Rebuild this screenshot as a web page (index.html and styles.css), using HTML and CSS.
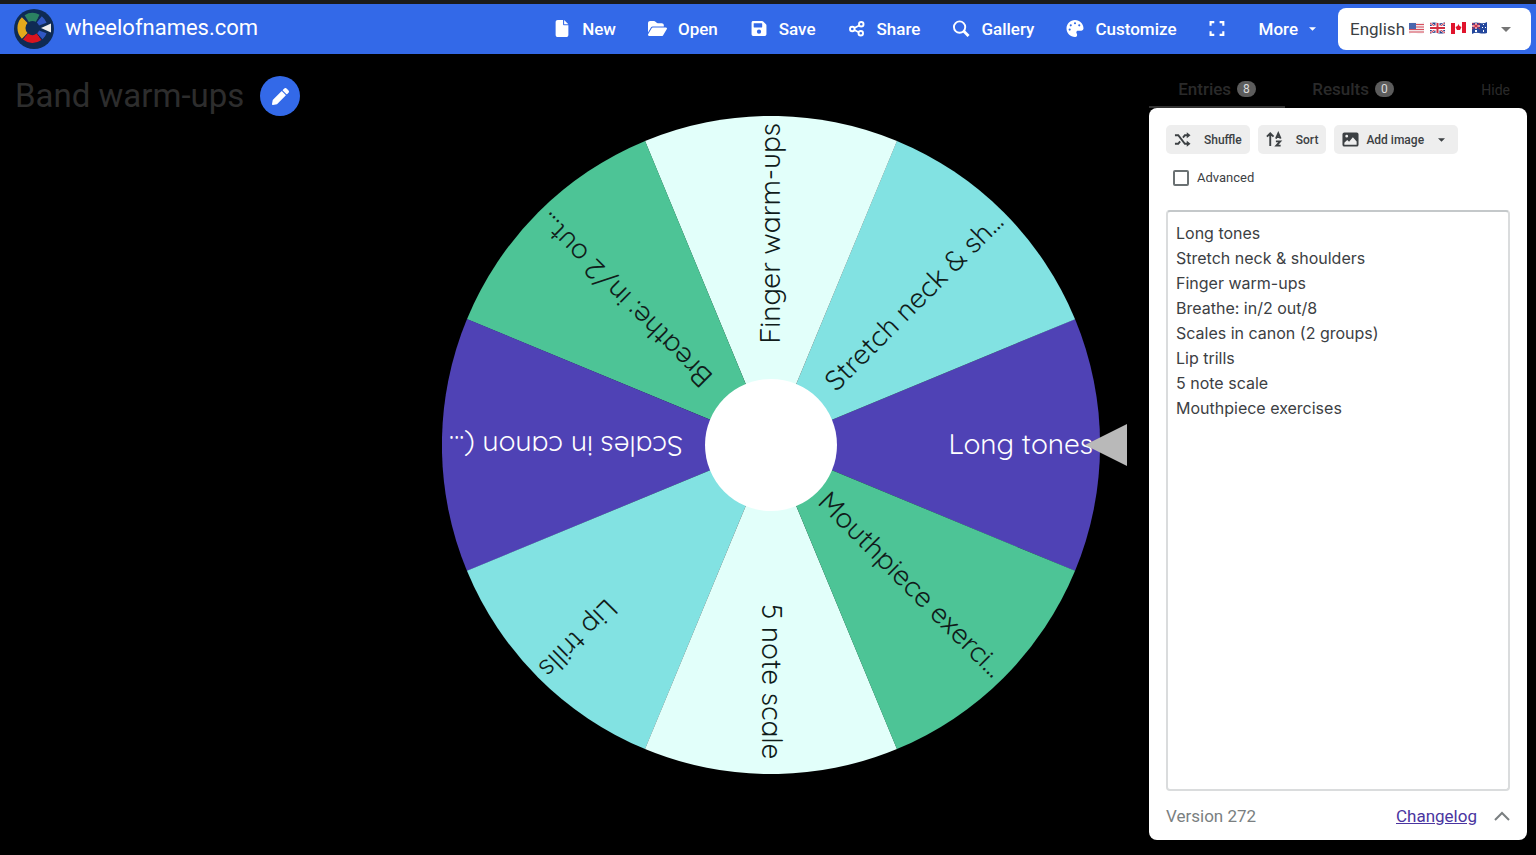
FILE: index.html
```html
<!DOCTYPE html>
<html lang="en">
<head>
    <meta charset="UTF-8">
    <title>Band warm-ups | wheelofnames.com</title>
    <link rel="stylesheet" href="styles.css">
</head>
<body>
    <header class="toolbar">
        <a class="brand" href="#">
            <svg class="logo" viewBox="0 0 40 40" fill="none" stroke-width="8">
                <circle cx="20" cy="20" r="20" fill="#0f2b54"/>
                <path d="M10.7 26.8A11 11 0 0 1 10.7 11.2" stroke="#e3a91c"/>
                <path d="M12.7 9.7A11 11 0 0 1 23.7 9.3" stroke="#2b8262"/>
                <path d="M25.3 10.3A11 11 0 0 1 28.8 15.2M28.8 22.8A11 11 0 0 1 25.9 27.2" stroke="#3057c4"/>
                <path d="M25 27.8A11 11 0 0 1 11.5 27.500" stroke="#d8141f"/>
                <path d="M27 19L37 14.500V23.500Z" fill="#eee"/>
            </svg>
            <span>wheelofnames.com</span>
        </a>
        <nav class="menu">
            <button type="button">
                <svg viewBox="-64 0 512 512"><path d="M0 64C0 28.700 28.700 0 64 0H224V128c0 17.700 14.300 32 32 32H384V448c0 35.300-28.700 64-64 64H64c-35.300 0-64-28.700-64-64V64zM384 128H256V0z"/></svg>
                New
            </button>
            <button type="button">
                <svg class="wide" viewBox="0 0 576 512"><path d="M88.700 223.800L0 375.800V96C0 60.700 28.700 32 64 32H181.500c17 0 33.300 6.700 45.300 18.700l26.500 26.500c12 12 28.300 18.700 45.300 18.700H416c35.300 0 64 28.700 64 64v32H144c-22.800 0-43.800 12.100-55.300 31.800zm27.600 16.100C122.100 230 132.600 224 144 224H544c11.500 0 22 6.100 27.700 16.100s5.700 22.200-.1 32.100l-112 192C453.900 474 443.400 480 432 480H32c-11.500 0-22-6.100-27.700-16.100s-5.700-22.200 .1-32.100z"/></svg>
                Open
            </button>
            <button type="button">
                <svg viewBox="-32 0 512 512"><path d="M434 130l-84-84A48 48 0 0 0 316 32H48C21.500 32 0 53.500 0 80v352c0 26.500 21.500 48 48 48h352c26.500 0 48-21.500 48-48V164a48 48 0 0 0-14-34zM224 416a64 64 0 1 1 0-128 64 64 0 0 1 0 128zM320 111V212c0 6.600-5.400 12-12 12H76c-6.600 0-12-5.400-12-12V108c0-6.600 5.400-12 12-12h228c10 0 16 6 16 15z"/></svg>
                Save
            </button>
            <button type="button">
                <svg class="line" viewBox="0 0 18 18"><circle cx="4" cy="9.500" r="2.400"/><circle cx="13.500" cy="4.500" r="2.400"/><circle cx="13" cy="14" r="2.400"/><path d="M6.200 8.500L11.300 5.800M6.200 10.600L10.800 13"/></svg>
                Share
            </button>
            <button type="button">
                <svg class="line" viewBox="0 0 18 18"><circle cx="7.500" cy="7.500" r="6"/><path d="M11.500 11.500L17 17" stroke-width="3"/></svg>
                Gallery
            </button>
            <button type="button">
                <svg viewBox="0 0 512 512"><path d="M512 256c0 .9 0 1.800 0 2.700c-.4 36.500-33.600 61.300-70.100 61.300H344c-26.500 0-48 21.500-48 48c0 3.400 .4 6.700 1 9.900c2.100 10.200 6.500 20 10.800 29.900c6.100 13.800 12.100 27.500 12.100 42c0 31.800-21.600 60.700-53.400 62c-3.500 .1-7 .2-10.600 .2C114.600 512 0 397.400 0 256S114.600 0 256 0S512 114.600 512 256zM128 288a32 32 0 1 0 -64 0 32 32 0 1 0 64 0zm0-96a32 32 0 1 0 0-64 32 32 0 1 0 0 64zM288 96a32 32 0 1 0 -64 0 32 32 0 1 0 64 0zm96 96a32 32 0 1 0 0-64 32 32 0 1 0 0 64z"/></svg>
                Customize
            </button>
            <button type="button" aria-label="Fullscreen">
                <svg class="line" viewBox="2 1 16 16"><path d="M3 6.500V3H6.500M11.500 3H15V6.500M15 11.500V15H11.500M6.500 15H3V11.500"/></svg>
            </button>
            <button type="button" class="more">
                More
                <svg class="caret" viewBox="0 0 8 4"><path d="M0 0H8L4 4Z"/></svg>
            </button>
            <div class="language">
                <select aria-label="Language">
                    <option>English</option>
                </select>
                <span class="flags">
                    <svg viewBox="0 0 15 12"><path fill="#f2e6e8" d="M0 1Q4 0 8 1T15 0V11Q11 12 7 11T0 12Z"/><path stroke="#d8505e" d="M0 2.500H15M0 5H15M0 7.500H15M0 10H15"/><path fill="#4a66ad" d="M0 1H7V7H0Z"/></svg>
                    <svg viewBox="0 0 15 12"><path fill="#28408c" d="M0 1Q4 0 8 1T15 0V11Q11 12 7 11T0 12Z"/><path stroke="#fff" stroke-width="2" d="M0 1L15 11M15 1L0 11"/><path stroke="#d22f43" d="M0 1L15 11M15 1L0 11"/><path stroke="#fff" stroke-width="4" d="M7.500 1V11M0 6H15"/><path stroke="#d22f43" stroke-width="2" d="M7.500 1V11M0 6H15"/></svg>
                    <svg viewBox="0 0 15 12"><path fill="#fff" d="M0 1Q4 0 8 1T15 0V11Q11 12 7 11T0 12Z"/><path fill="#e0142c" d="M0 1H4V12H0ZM11 0H15V11H11ZM7.500 2L8.500 4 10.500 5 9 8H6L4.500 5 6.500 4Z"/></svg>
                    <svg viewBox="0 0 15 12"><path fill="#24479c" d="M0 1Q4 0 8 1T15 0V11Q11 12 7 11T0 12Z"/><path stroke="#fff" stroke-width="2" d="M0 4H8M4 1V7"/><path stroke="#d22f43" d="M0 4H8M4 1V7M0 1L8 7M8 1L0 7"/><path fill="#fff" d="M3 8H5V10H3ZM11 2H12V3H11ZM10 5H11V6H10ZM13 5H14V6H13ZM11 8H12V10H11Z"/></svg>
                </span>
                <svg class="arrow" viewBox="0 0 10 5"><path d="M0 0H10L5 5Z"/></svg>
            </div>
        </nav>
    </header>

    <main class="stage">
        <section class="title">
            <h1>Band warm-ups</h1>
            <button type="button" class="edit" aria-label="Edit title">
                <svg viewBox="0 0 512 512"><path d="M498 142l-46 46c-5 5-12 5-17 0l-111-111c-5-5-5-12 0-17l46-46c19-19 49-19 68 0l60 60c19 19 19 49 0 68zM284 100L22 362 0 484c-3 16 11 31 28 28l122-22 262-262c5-5 5-12 0-17l-111-111c-5-5-12-5-17 0z"/></svg>
            </button>
        </section>

        <svg class="wheel" viewBox="-329 -329 685 658">
            <defs>
                <path id="slice" d="M0 0L304 -126A329 329 0 0 1 304 126Z"/>
            </defs>
            <g class="purple">
                <use href="#slice"/>
                <text x="322" y="9">Long tones</text>
            </g>
            <g class="cyan" transform="rotate(-45)">
                <use href="#slice"/>
                <text x="322" y="9">Stretch neck &amp; sh...</text>
            </g>
            <g class="pale" transform="rotate(-90)">
                <use href="#slice"/>
                <text x="322" y="9">Finger warm-ups</text>
            </g>
            <g class="green" transform="rotate(-135)">
                <use href="#slice"/>
                <text x="322" y="9">Breathe: in/2 out...</text>
            </g>
            <g class="purple" transform="rotate(180)">
                <use href="#slice"/>
                <text x="322" y="9">Scales in canon (...</text>
            </g>
            <g class="cyan" transform="rotate(135)">
                <use href="#slice"/>
                <text x="322" y="9">Lip trills</text>
            </g>
            <g class="pale" transform="rotate(90)">
                <use href="#slice"/>
                <text x="322" y="9">5 note scale&nbsp;</text>
            </g>
            <g class="green" transform="rotate(45)">
                <use href="#slice"/>
                <text x="322" y="9">Mouthpiece exerci...</text>
            </g>
            <circle r="66" fill="#fff"/>
            <path class="pointer" d="M314 0L356 -21V21Z"/>
        </svg>

        <aside class="side">
            <div class="tabs">
                <button type="button" class="tab active">Entries <span class="count">8</span></button>
                <button type="button" class="tab">Results <span class="count">0</span></button>
                <button type="button" class="hide">Hide</button>
            </div>
            <div class="card">
                <div class="tools">
                    <button type="button">
                        <svg class="line" viewBox="0 0 18 18"><path d="M1 4.500H4.500L11.500 13.500H15M1 13.500H4.500L6.500 11M9.500 7L11.500 4.500H15"/><path class="solid" d="M13.500 1.200L17.500 4.500 13.500 7.800ZM13.500 10.200L17.500 13.500 13.500 16.800Z"/></svg>
                        <span>Shuffle</span>
                    </button>
                    <button type="button">
                        <svg class="line" viewBox="0 0 18 18"><path d="M4.500 16V3M1 6L4.500 2.500 8 6M10.500 8L13 2.500 15.500 8M11.300 6.500H14.700M10.500 11H15L11 15.500H15.500"/></svg>
                        <span>Sort</span>
                    </button>
                    <button type="button" class="add">
                        <svg viewBox="0 0 18 18"><path fill-rule="evenodd" d="M2.500 1.500H15.500Q17.500 1.500 17.500 3.500V14.500Q17.500 16.500 15.500 16.500H2.500Q.5 16.500 .5 14.500V3.500Q.5 1.500 2.500 1.500ZM2.500 14.500H15.500V11L11.500 6.500 7.500 11.500 5.500 9.500 2.500 12.500ZM5 4A1.500 1.500 0 1 0 5 7 1.500 1.500 0 1 0 5 4Z"/></svg>
                        <span>Add image</span>
                        <svg class="caret" viewBox="0 0 8 4"><path d="M0 0H8L4 4Z"/></svg>
                    </button>
                </div>
                <label class="advanced"><input type="checkbox"> Advanced</label>
                <textarea aria-label="Entries" spellcheck="false">Long tones
Stretch neck &amp; shoulders
Finger warm-ups
Breathe: in/2 out/8
Scales in canon (2 groups)
Lip trills
5 note scale
Mouthpiece exercises</textarea>
                <footer class="version">
                    <span>Version 272</span>
                    <a href="#">Changelog</a>
                    <button type="button" aria-label="Expand">
                        <svg class="line" viewBox="0 0 16 10"><path d="M1 9L8 2L15 9"/></svg>
                    </button>
                </footer>
            </div>
        </aside>
    </main>
</body>
</html>
```
FILE: styles.css
```css
* {
    box-sizing: border-box;
}
body {
    margin: 0;
    min-height: 100vh;
    display: flex;
    flex-direction: column;
    background: #000;
    font-family: Roboto, "Liberation Sans", sans-serif;
    color: #3c4043;
}
button {
    border: none;
    padding: 0;
    background: none;
    color: inherit;
    font: inherit;
    cursor: pointer;
}
svg {
    display: block;
    flex: none;
    fill: currentColor;
}
.line {
    fill: none;
    stroke: currentColor;
    stroke-width: 2;
}
.solid {
    fill: currentColor;
    stroke: none;
}

/* toolbar */
.toolbar {
    display: flex;
    align-items: center;
    justify-content: space-between;
    height: 54px;
    padding: 0 5px 0 14px;
    border-top: 4px solid #1b1b1b;
    background: #3369e8;
    color: #fff;
}
.brand {
    display: flex;
    align-items: center;
    gap: 11px;
    color: #fff;
    font-size: 22px;
    line-height: 30px;
    text-decoration: none;
}
.brand span {
    padding-bottom: 3px;
}
.logo {
    width: 40px;
    height: 40px;
}
.menu {
    display: flex;
    align-items: center;
    font-size: 17px;
    font-weight: 500;
}
.menu button {
    display: flex;
    align-items: center;
    gap: 11px;
    height: 42px;
    padding: 0 16px 1px;
}
.menu button svg {
    width: 18px;
    height: 17px;
}
.menu button svg.wide {
    width: 19px;
}
.menu .more {
    padding-right: 22px;
}
.menu .more .caret,
.add .caret {
    width: 7px;
    height: 4px;
}
.language {
    position: relative;
    width: 193px;
}
.language select {
    width: 100%;
    height: 42px;
    padding: 0 12px 1px;
    border: none;
    border-radius: 8px;
    background: #fff;
    color: #3c4043;
    font: 17px Roboto, sans-serif;
    appearance: none;
}
.flags {
    position: absolute;
    top: 14px;
    left: 71px;
    display: flex;
    gap: 6px;
    pointer-events: none;
}
.flags svg {
    width: 15px;
    height: 12px;
    fill: none;
}
.arrow {
    position: absolute;
    top: 19px;
    right: 20px;
    width: 10px;
    height: 5px;
    color: #757575;
    pointer-events: none;
}

/* title and wheel */
.stage {
    flex: 1;
    display: grid;
    grid-template-columns: minmax(0, 442fr) minmax(0, 685fr) 400px;
    padding-right: 9px;
}
.title {
    display: flex;
    align-items: center;
    align-self: start;
    gap: 16px;
    padding: 22px 0 0 15px;
}
h1 {
    margin: 0;
    color: #2d2d2d;
    font-size: 33px;
    font-weight: 400;
    line-height: 40px;
    white-space: nowrap;
}
.edit {
    display: grid;
    place-items: center;
    width: 40px;
    height: 40px;
    border-radius: 50%;
    background: #3369e8;
    color: #fff;
}
.edit svg {
    width: 17px;
    height: 17px;
}
.wheel {
    width: 100%;
    margin-top: 62px;
}
.wheel text {
    font-family: Quicksand, Lato, sans-serif;
    font-size: 28px;
    text-anchor: end;
    white-space: pre;
    fill: #101c1a;
}
.purple use {
    fill: #4f42b5;
}
.purple text {
    fill: #fff;
}
.cyan use {
    fill: #82e2e2;
}
.pale use {
    fill: #e2fffa;
}
.green use {
    fill: #4dc496;
}
.pointer {
    fill: #b9b9b9;
}

/* entries panel */
.side {
    display: flex;
    flex-direction: column;
    padding: 17px 0 15px 22px;
}
.tabs {
    display: flex;
    height: 37px;
    color: #2a2a2a;
    font-size: 17px;
    font-weight: 500;
}
.tab {
    display: flex;
    align-items: center;
    justify-content: center;
    gap: 6px;
    width: 136px;
    border-bottom: 2px solid transparent;
}
.active {
    border-bottom-color: #333;
}
.count {
    padding: 0 6px;
    border-radius: 8px;
    background: #5c5c5c;
    color: #ddd;
    font-size: 12px;
    font-weight: 400;
    line-height: 16px;
}
.hide {
    margin-left: auto;
    padding-right: 17px;
    font-size: 14px;
    font-weight: 400;
}
.card {
    flex: 1;
    display: flex;
    flex-direction: column;
    padding: 17px 17px 11px;
    border-radius: 8px;
    background: #fff;
}
.tools {
    display: flex;
    gap: 8px;
    font-size: 12px;
    font-weight: 500;
}
.tools button {
    display: flex;
    align-items: center;
    gap: 13px;
    height: 29px;
    padding: 0 8px;
    border-radius: 5px;
    background: #eee;
}
.tools svg {
    width: 17px;
    height: 17px;
}
.tools .add {
    gap: 7px;
    padding-right: 13px;
}
.tools .caret {
    margin-left: 7px;
}
.advanced {
    display: flex;
    align-items: center;
    gap: 8px;
    margin: 15px 0 24px 7px;
    font-size: 13px;
    line-height: 17px;
}
.advanced input {
    width: 16px;
    height: 16px;
    margin: 0;
    border: 2px solid #6b7173;
    border-radius: 2px;
    appearance: none;
}
textarea {
    flex: 1;
    width: 100%;
    padding: 9px 8px;
    border: 2px solid #dadcdd;
    border-top-color: #c4c8ca;
    border-radius: 4px;
    background: #fff;
    color: #3c4043;
    font: 16px/25px Inter, "Liberation Sans", sans-serif;
    resize: none;
}
.version {
    display: flex;
    align-items: center;
    gap: 17px;
    margin-top: 12px;
    color: #7a7f81;
    font-size: 17px;
    line-height: 26px;
}
.version a {
    margin-left: auto;
    color: #4a35a0;
}
.version svg {
    width: 16px;
    height: 10px;
}
```
